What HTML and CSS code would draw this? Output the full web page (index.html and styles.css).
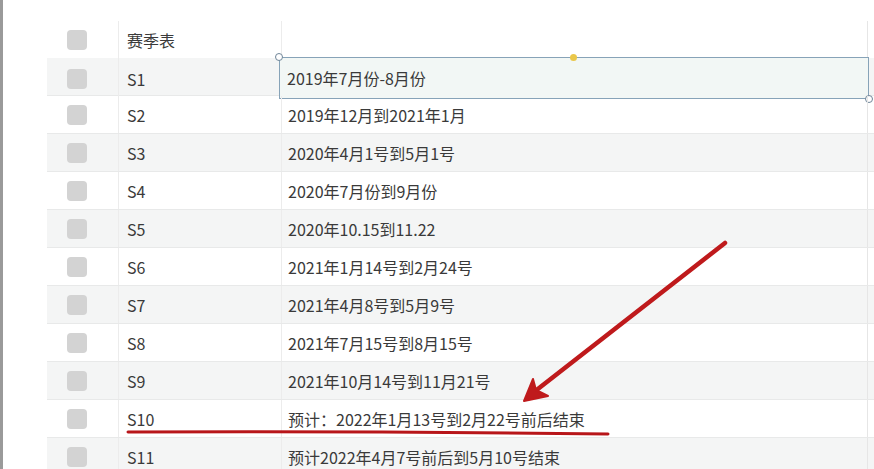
FILE: index.html
```html
<!DOCTYPE html>
<html>
<head>
    <title>赛季表</title>
    <link rel="stylesheet" href="styles.css">
</head>
<body>
  <div class="sheet">
    <div class="grid">
      <div class="row head">
        <div class="cell check"><span class="box"></span></div>
        <div class="cell name">赛季表</div>
        <div class="cell value"></div>
      </div>
      <div class="row alt">
        <div class="cell check"><span class="box"></span></div>
        <div class="cell name">S1</div>
        <div class="cell value selected">2019年7月份-8月份
          <span class="handle tl"></span>
          <span class="handle br"></span>
          <span class="dot"></span>
        </div>
      </div>
      <div class="row">
        <div class="cell check"><span class="box"></span></div>
        <div class="cell name">S2</div>
        <div class="cell value">2019年12月到2021年1月</div>
      </div>
      <div class="row alt">
        <div class="cell check"><span class="box"></span></div>
        <div class="cell name">S3</div>
        <div class="cell value">2020年4月1号到5月1号</div>
      </div>
      <div class="row">
        <div class="cell check"><span class="box"></span></div>
        <div class="cell name">S4</div>
        <div class="cell value">2020年7月份到9月份</div>
      </div>
      <div class="row alt">
        <div class="cell check"><span class="box"></span></div>
        <div class="cell name">S5</div>
        <div class="cell value">2020年10.15到11.22</div>
      </div>
      <div class="row">
        <div class="cell check"><span class="box"></span></div>
        <div class="cell name">S6</div>
        <div class="cell value">2021年1月14号到2月24号</div>
      </div>
      <div class="row alt">
        <div class="cell check"><span class="box"></span></div>
        <div class="cell name">S7</div>
        <div class="cell value">2021年4月8号到5月9号</div>
      </div>
      <div class="row">
        <div class="cell check"><span class="box"></span></div>
        <div class="cell name">S8</div>
        <div class="cell value">2021年7月15号到8月15号</div>
      </div>
      <div class="row alt">
        <div class="cell check"><span class="box"></span></div>
        <div class="cell name">S9</div>
        <div class="cell value">2021年10月14号到11月21号</div>
      </div>
      <div class="row">
        <div class="cell check"><span class="box"></span></div>
        <div class="cell name">S10</div>
        <div class="cell value">预计：2022年1月13号到2月22号前后结束</div>
      </div>
      <div class="row alt">
        <div class="cell check"><span class="box"></span></div>
        <div class="cell name">S11</div>
        <div class="cell value">预计2022年4月7号前后到5月10号结束</div>
      </div>
    </div>

    <!-- red annotation drawn over the sheet -->
    <svg class="marks" width="874" height="469" viewBox="0 0 874 469">
      <path d="M725 243 L534 392" stroke="#bf1a1c" stroke-width="4.5" stroke-linecap="round" fill="none"/>
      <path d="M524 401 L533 379 L536 390 L548 396 Z" fill="#bf1a1c" stroke="#bf1a1c" stroke-width="2" stroke-linejoin="round"/>
      <path d="M128 432 Q370 431 608 434" stroke="#b8161a" stroke-width="3" stroke-linecap="round" fill="none"/>
    </svg>
  </div>
</body>
</html>
```

FILE: styles.css
```css
* {
    margin: 0;
    padding: 0;
    box-sizing: border-box;
}

body {
    font-family: "Noto Sans CJK SC", "Noto Sans", sans-serif;
    background-color: #fff;
    color: #3a3a3a;
}

.sheet {
    position: relative;
    width: 874px;
    height: 469px;
    overflow: hidden;
    border-left: 3px solid #9a9a9a;
    padding: 21px 0 0 44px;
}

.grid {
    display: flex;
    flex-direction: column;
}

.row {
    display: grid;
    grid-template-columns: 71px 163px 587px 6px;
    height: 38px;
    border-bottom: 1px solid #e8e9e9;
    background-color: #fff;
}

.row.alt {
    background-color: #f4f5f5;
}

.row.head {
    border-bottom: 1px solid #ececec;
    margin-bottom: -1px;
}

.cell {
    display: flex;
    align-items: center;
    font-size: 16px;
    line-height: 1;
}

.check {
    justify-content: center;
    padding-right: 12px;
}

.box {
    width: 20px;
    height: 20px;
    border-radius: 4px;
    background-color: #d3d3d3;
}

.name {
    border-left: 1px solid #ececec;
    padding-left: 8px;
}

.value {
    border-left: 1px solid #ececec;
    border-right: 1px solid #e6e6e6;
    padding-left: 6px;
    position: relative;
}

.value.selected {
    border: 1px solid #87a3b8;
    background-color: #f2f7f5;
    margin: -1px -1px 0 -2px;
    height: 42px;
    padding-left: 7px;
}

.handle {
    position: absolute;
    width: 8px;
    height: 8px;
    border: 1.5px solid #6f8598;
    border-radius: 50%;
    background-color: #fff;
}

.handle.tl {
    top: -5px;
    left: -5px;
}

.handle.br {
    bottom: -5px;
    right: -5px;
}

.dot {
    position: absolute;
    top: -4px;
    left: 290px;
    width: 7px;
    height: 7px;
    border-radius: 50%;
    background-color: #eac74a;
}

.marks {
    position: absolute;
    top: 0;
    left: -3px;
    pointer-events: none;
}
```
